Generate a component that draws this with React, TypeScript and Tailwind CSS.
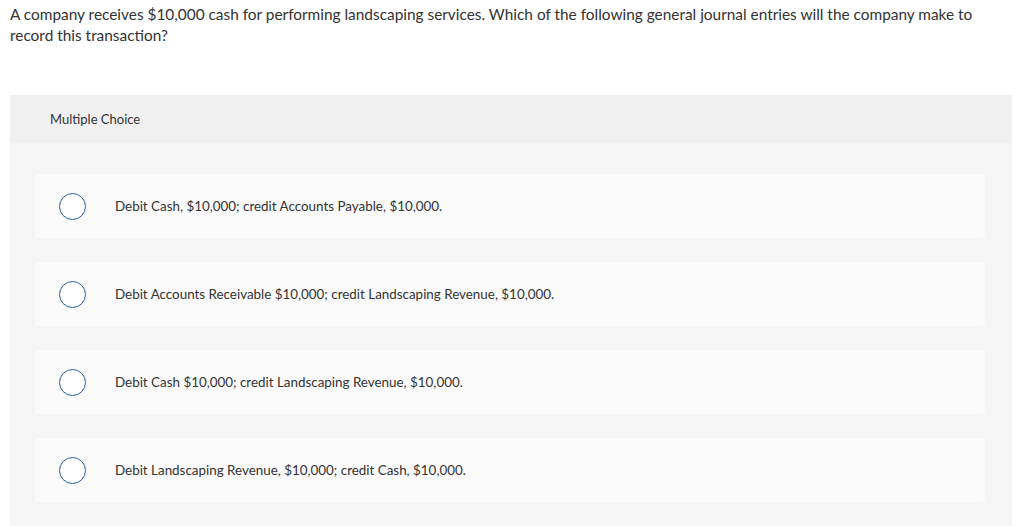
import React from "react";

const options = [
  "Debit Cash, $10,000; credit Accounts Payable, $10,000.",
  "Debit Accounts Receivable $10,000; credit Landscaping Revenue, $10,000.",
  "Debit Cash $10,000; credit Landscaping Revenue, $10,000.",
  "Debit Landscaping Revenue, $10,000; credit Cash, $10,000.",
];

export default function App() {
  return (
    <div
      className="w-[1024px] h-[526px] overflow-hidden bg-white text-[#333333]"
      style={{ fontFamily: "Lato, 'Open Sans', sans-serif" }}
    >
      <div className="pl-[10px] pr-[30px] pt-[4px] text-[15.4px] leading-[21px]">
        A company receives $10,000 cash for performing landscaping services. Which of the following general journal entries will the company make to record this transaction?
      </div>
      <div className="mt-[49px] ml-[10px] w-[1002px]">
        <div className="h-[48px] bg-[#f0f0f0] flex items-center pl-[40px] pt-[2px] text-[13px]">
          Multiple Choice
        </div>
        <div className="bg-[#f5f5f5] pt-[31px] pb-[24px] pl-[25px] pr-[27px] flex flex-col gap-[24px]">
          {options.map((o) => (
            <div key={o} className="h-[64px] bg-[#fafafa] rounded-[2px] flex items-center">
              <div className="ml-[24px] w-[27px] h-[27px] rounded-full border border-[#2d5d9a] bg-white shrink-0" />
              <div className="ml-[29px] text-[13.4px]">{o}</div>
            </div>
          ))}
        </div>
      </div>
    </div>
  );
}
